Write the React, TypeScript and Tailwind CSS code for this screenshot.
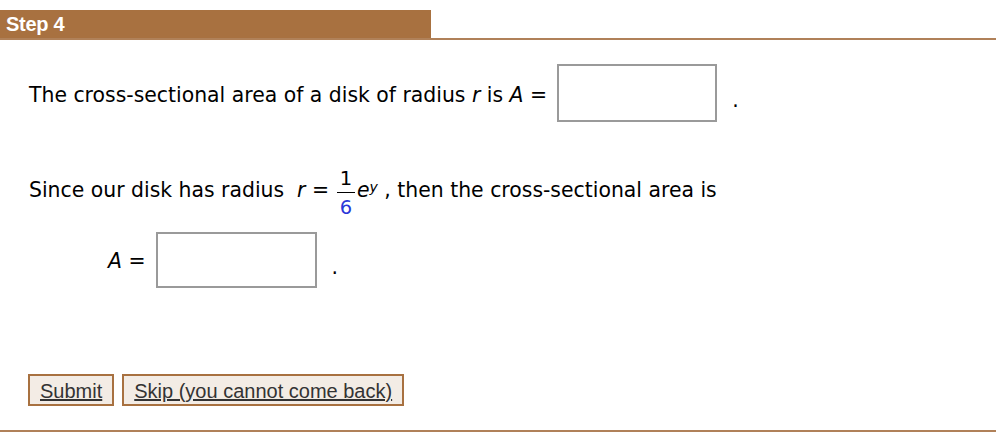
import React from 'react';

const body = { fontFamily: '"DejaVu Sans", Verdana, sans-serif' };
const arial = { fontFamily: '"Liberation Sans", Arial, sans-serif' };

function AnswerBox({ className = '' }: { className?: string }) {
  return <input type="text" className={`border-2 border-[#9a9a9a] bg-white outline-none ${className}`} />;
}

function Fraction() {
  return (
    <span className="inline-flex flex-col items-center ml-[8px] mr-[2px] leading-none text-[19.5px] mt-[6px]">
      <span className="pb-[3px]">1</span>
      <span className="w-[18px] border-t border-black" />
      <span className="pt-[5px] text-[#2a37d8]">6</span>
    </span>
  );
}

export default function App() {
  return (
    <div className="w-[996px] h-[434px] bg-white text-black overflow-hidden" style={body}>
      {/* step header */}
      <div className="pt-[10px]">
        <div className="w-[431px] h-[28px] bg-[#a87140] flex items-center pl-[6px]">
          <span className="text-white font-bold text-[20px] tracking-[-0.3px]" style={arial}>Step 4</span>
        </div>
        <div className="h-[2px] bg-[#b08159]" />
      </div>

      <div className="flex items-center pl-[29px] mt-[24px] text-[20.4px]">
        <span className="pt-[5px]">
          The cross-sectional area of a disk of radius <i>r</i> is <i>A</i> =
        </span>
        <AnswerBox className="ml-[10px] w-[160px] h-[58px]" />
        <span className="ml-[15px] pt-[14px]">.</span>
      </div>

      <div className="flex items-center pl-[29px] mt-[41px] text-[20.4px]">
        <span>Since our disk has radius&nbsp; <i>r</i> =</span>
        <Fraction />
        <span>
          <i>e</i>
          <sup className="text-[14px] italic relative top-[-5px]">y</sup>
        </span>
        <span>&nbsp;, then the cross-sectional area is</span>
      </div>

      <div className="flex items-center pl-[108px] mt-[15px] text-[20.4px]">
        <span className="pt-[3px]"><i>A</i> =</span>
        <AnswerBox className="ml-[10px] w-[161px] h-[56px]" />
        <span className="ml-[15px] pt-[14px]">.</span>
      </div>

      <div className="flex gap-[8px] pl-[28px] mt-[86px]" style={arial}>
        <button className="h-[32px] px-[10px] bg-[#f3ece5] border-2 border-[#a87140] text-[#333] text-[20px] underline">
          Submit
        </button>
        <button className="h-[32px] px-[10px] bg-[#f3ece5] border-2 border-[#a87140] text-[#333] text-[20px] underline">
          Skip (you cannot come back)
        </button>
      </div>

      <div className="mt-[24px] h-[2px] bg-[#b08159]" />
    </div>
  );
}
